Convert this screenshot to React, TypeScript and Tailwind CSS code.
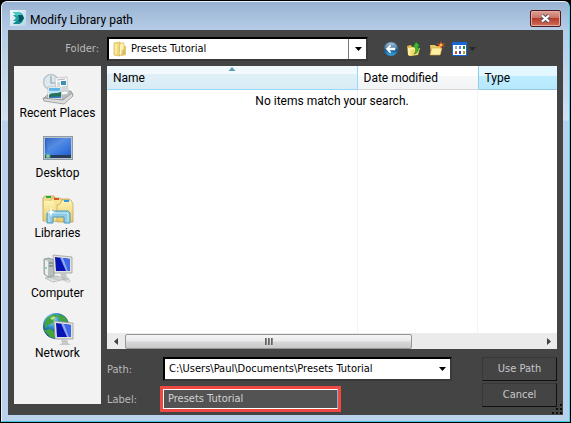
import type { ReactNode } from "react";

function AppLogo() {
	return (
		<svg width="16" height="16" viewBox="0 0 16 16" aria-hidden="true">
			<defs>
				<linearGradient id="logoBg" x2="1" y2="1">
					<stop stopColor="#f4fafc" />
					<stop offset="1" stopColor="#b5d6e4" />
				</linearGradient>
			</defs>
			<rect width="16" height="16" fill="url(#logoBg)" />
			<path d="M3 2h6q4 1 5 6-1 5-5 6H3l3-3H3l3-3-3-3h3z" fill="#1fa3a5" />
			<path d="M3 2h6l3 3-5 1z" fill="#43cbc6" />
			<path d="M8 5l4 0 2 3-3 4H8l1-4z" fill="#07565f" />
			<path d="M3 14l4-3 5 1-3 2z" fill="#128a90" />
		</svg>
	);
}

function FolderIcon() {
	return (
		<svg width="14" height="16" viewBox="0 0 14 16" aria-hidden="true">
			<path d="M1 2l6-1v14l-6-1z" fill="#f3dc80" stroke="#d9b953" strokeWidth=".7" />
			<path d="M7 2h4v12H6z" fill="#fff3b4" stroke="#d4b44e" strokeWidth=".7" />
			<path d="M11 5h2v9l-5 1V9l3-1z" fill="#e8c75f" />
			<path d="M3 3v10M8 4v9" stroke="#fff8cf" />
			<path d="M11 10v3" stroke="#8bbbd8" />
		</svg>
	);
}

function BackIcon() {
	return (
		<svg width="16" height="16" viewBox="0 0 16 16" aria-hidden="true">
			<defs>
				<linearGradient id="orb" x2="0" y2="1">
					<stop stopColor="#b4c6d1" />
					<stop offset=".45" stopColor="#4b7fa8" />
					<stop offset=".55" stopColor="#10528b" />
					<stop offset="1" stopColor="#42b4ef" />
				</linearGradient>
			</defs>
			<circle cx="8" cy="8" r="7" fill="url(#orb)" stroke="#2a5f86" strokeWidth=".6" />
			<path d="M3 8l4-4 1 1-2 2h6v2H6l2 2-1 1z" fill="#fff" stroke="#fff" strokeWidth=".5" />
		</svg>
	);
}

function UpFolderIcon() {
	return (
		<svg width="16" height="16" viewBox="0 0 16 16" aria-hidden="true">
			<path d="M1 5l4-1 1 2 4-1v8l-6 2-2-1z" fill="#e2bd4b" />
			<path d="M2 7l7-1v6l-4 3-3-1z" fill="#fff0a2" />
			<path d="M5 9l9-2-2 7-8 1z" fill="#f3d868" />
			<path d="M9 12c1-2 1-4 0-6H7l3-5 4 4h-2c1 4 0 7-4 8z" fill="#3eb735" stroke="#187d1a" strokeWidth=".6" />
		</svg>
	);
}

function NewFolderIcon() {
	return (
		<svg width="16" height="16" viewBox="0 0 16 16" aria-hidden="true">
			<path d="M1 4h5l1 1h5v8H2z" fill="#e9c862" />
			<path d="M3 7h10l-2 7H1z" fill="#fff0a4" stroke="#d7ad3f" strokeWidth=".6" />
			<path d="M12 0l1 3 3-1-2 2 2 2-3-1-1 3-1-3-3 1 2-2-2-2 3 1z" fill="#ee5d20" />
			<circle cx="12" cy="4" r="1.2" fill="#ffc343" />
		</svg>
	);
}

function ViewIcon() {
	return (
		<svg width="24" height="16" viewBox="0 0 24 16" aria-hidden="true">
			<rect y="1" width="15" height="14" rx="1" fill="#1667d5" />
			<rect x="1" y="4" width="13" height="10" fill="#fff" />
			<path d="M3 5h2v3H3z" fill="#9ba9b9" />
			<path d="M7 5h2v3H7z" fill="#6b7fe1" />
			<path d="M11 5h2v3h-2z" fill="#248d36" />
			<path d="M3 10h2v3H3z" fill="#d45132" />
			<path d="M7 10h2v3H7z" fill="#334fae" />
			<path d="M11 10h2v3h-2z" fill="#c89d22" />
			<path d="M17 6h7l-3.500 4z" fill="#292929" />
		</svg>
	);
}

function RecentIcon() {
	return (
		<svg width="32" height="32" viewBox="0 0 32 32" aria-hidden="true">
			<circle cx="9" cy="9" r="7.500" fill="#dce8ed" stroke="#bcc6cb" strokeWidth="1.500" />
			<path d="M9 3v7h6" fill="none" stroke="#8fa6b3" strokeWidth="1.200" />
			<path d="M2 25l7-7h20l2 4-8 5z" fill="#b9bcbe" stroke="#85898b" strokeWidth=".6" />
			<path d="M13 5l12-1 1 17-12 2z" fill="#fbfbfa" stroke="#b8babb" strokeWidth=".7" />
			<path d="M15 7l8-1M15 10h3M15 12h3M20 14h5M20 16h5M20 18h5" stroke="#a9b4bb" />
			<path d="M19 8h5v4h-5z" fill="#3e8fb4" />
			<path d="M6 14h13l1 12H6z" fill="#fff" stroke="#a8adb0" strokeWidth=".6" />
			<path d="M7 15h11l1 6H7z" fill="#62b3e8" />
			<path d="M7 18c4-1 7 1 12-1v4H7z" fill="#bfe4f5" />
			<path d="M7 22c3-3 6-1 12-3v6H7z" fill="#26715a" />
			<path d="M7 24l12-1v2H7z" fill="#3878bd" />
			<path d="M1 25l20 2 9-7 1 3-9 8-20-3z" fill="#dcdddd" stroke="#85898b" strokeWidth=".7" />
		</svg>
	);
}

function DesktopIcon() {
	return (
		<svg width="32" height="32" viewBox="0 0 32 32" aria-hidden="true">
			<defs>
				<linearGradient id="desk" x2="1" y2="1">
					<stop stopColor="#164fbf" />
					<stop offset=".5" stopColor="#4a87e5" />
					<stop offset="1" stopColor="#235fd0" />
				</linearGradient>
			</defs>
			<rect x="1.500" y="3.500" width="29" height="23" fill="#b9c2ca" stroke="#8b9ba7" />
			<rect x="3" y="5" width="26" height="17" fill="url(#desk)" />
			<path d="M3 5h24L6 18z" fill="#fff" opacity=".12" />
			<path d="M3 22h26v3H3z" fill="#263d57" />
			<circle cx="6" cy="23" r="2.500" fill="#34a3b1" />
			<path d="M6 21v4M4 23h4" stroke="#e9df65" strokeWidth=".7" />
		</svg>
	);
}

function LibrariesIcon() {
	return (
		<svg width="32" height="32" viewBox="0 0 32 32" aria-hidden="true">
			<defs>
				<linearGradient id="lib" x2="0" y2="1">
					<stop stopColor="#fff4b4" />
					<stop offset="1" stopColor="#e8c967" />
				</linearGradient>
			</defs>
			<path d="M1 5l2-2h9l2 3h13v22H1z" fill="#eed98c" stroke="#bb983d" strokeWidth=".7" />
			<path d="M4 3h5v2H4z" fill="#28a846" />
			<path d="M8 8l2-3h8l2 3h9v20H8z" fill="#f8e594" stroke="#c29f46" strokeWidth=".7" />
			<path d="M12 5h5v2h-5z" fill="#d6532e" />
			<path d="M15 12l3-1 2-4h9l2 4v18H15z" fill="url(#lib)" stroke="#c5a24c" strokeWidth=".7" />
			<path d="M2 8h10v20H2z" fill="url(#lib)" />
			<path d="M22 7h5v2h-5z" fill="#2f9be0" />
			<path d="M5 30V20l2-2h19l2 2v10h-6v-6H11v6z" fill="#8fcbe4" stroke="#4d9bbd" />
			<path d="M7 29v-9h19v9" fill="none" stroke="#c9ebf6" />
			<path d="M9 14l1 4 4 1-4 1-1 4-1-4-4-1 4-1z" fill="#fff" />
		</svg>
	);
}

function Monitor() {
	return (
		<>
			<path d="M11 2l19 2 0 16-18 0z" fill="#e1e2d9" stroke="#8f9692" strokeWidth=".7" />
			<path d="M13 4l15 2v12H14z" fill="#0813b4" />
			<path d="M20 5l8 1v12h-2z" fill="#3f66ea" />
			<path d="M18 4.600l3 .4 5 13h-2z" fill="#8ea6f5" />
			<path d="M18 20h6l1 4 3 2-5 2-7-2 3-2z" fill="#c4c9c8" />
		</>
	);
}

function ComputerIcon() {
	return (
		<svg width="32" height="32" viewBox="0 0 32 32" aria-hidden="true">
			<path d="M2 6l5-1 5 2v16l-6 1-4-3z" fill="#b7c0bf" stroke="#7f8988" strokeWidth=".7" />
			<path d="M3 7l3 1v15l-3-2z" fill="#edf0ef" />
			<path d="M7 10h4M7 13h4" stroke="#64716e" />
			<path d="M4 14v2" stroke="#49b95c" />
			<Monitor />
			<path d="M3 25l12-2 8 3-12 3z" fill="#eceeed" stroke="#a1a7a6" strokeWidth=".7" />
			<path d="M6 25l10-1M8 26l10-1M11 27l9-1" stroke="#a6adac" strokeWidth=".6" />
			<ellipse cx="26" cy="28" rx="2.500" ry="1.300" fill="#e3e6e5" stroke="#a6adac" strokeWidth=".4" />
		</svg>
	);
}

function NetworkIcon() {
	return (
		<svg width="32" height="32" viewBox="0 0 32 32" aria-hidden="true">
			<defs>
				<radialGradient id="globe" cx=".35" cy=".25">
					<stop stopColor="#a9e4f5" />
					<stop offset=".6" stopColor="#328fcb" />
					<stop offset="1" stopColor="#14598f" />
				</radialGradient>
			</defs>
			<circle cx="14" cy="13" r="13" fill="url(#globe)" />
			<path d="M5 5l7-4 4 2-4 3-1 4-5 2-3 4V9zM17 1l6 3 3 5-8-1-2-3zM2 17l7-1 4 4-1 5-4-1z" fill="#43a63d" />
			<path d="M8 5l4-2 2 2-4 2z" fill="#b6df88" />
			<g transform="translate(1 6)">
				<Monitor />
			</g>
		</svg>
	);
}

const places: { name: string; icon: ReactNode }[] = [
	{ name: "Recent Places", icon: <RecentIcon /> },
	{ name: "Desktop", icon: <DesktopIcon /> },
	{ name: "Libraries", icon: <LibrariesIcon /> },
	{ name: "Computer", icon: <ComputerIcon /> },
	{ name: "Network", icon: <NetworkIcon /> },
];

const tools: { name: string; icon: ReactNode }[] = [
	{ name: "Back", icon: <BackIcon /> },
	{ name: "Up one level", icon: <UpFolderIcon /> },
	{ name: "Create new folder", icon: <NewFolderIcon /> },
	{ name: "View menu", icon: <ViewIcon /> },
];

function DropArrow() {
	return (
		<svg width="7" height="4" viewBox="0 0 7 4" className="mr-1 shrink-0" aria-hidden="true">
			<path d="M0 0h7L3.500 4z" fill="#000" />
		</svg>
	);
}

function DialogButton({ children }: { children: ReactNode }) {
	return (
		<button
			type="button"
			className="h-6 w-full border border-t-[#383838] border-l-[#383838] border-r-[#101010] border-b-[#101010] bg-[#444] leading-4 text-[#c8c8c8]"
		>
			{children}
		</button>
	);
}

function App() {
	return (
		<main className="flex min-h-screen flex-col border border-black bg-black font-['DejaVu_Sans_Condensed','DejaVu_Sans',sans-serif] text-[11px] text-black">
			<div className="flex flex-1 flex-col rounded-t-md border border-t-[#eaf3fb] border-r-[#43d3ee] border-b-[#43c5de] border-l-[#e4f0fa] bg-[linear-gradient(#98b3d2_0px,#b5cce6_28px,#d3e1f1_118px,#b9d1ea_119px)] px-1.5 pb-1.5">
				<header className="flex h-7 items-start gap-1 pt-2 pr-0.5 pl-0.5">
					<AppLogo />
					<h1 className="flex-1 font-['Roboto','Noto_Sans',sans-serif] text-xs leading-5">Modify Library path</h1>
					<button
						type="button"
						aria-label="Close"
						className="flex h-[17px] w-[31px] items-center justify-center rounded-xs border border-[#4c1c22] bg-[linear-gradient(#dda196_0%,#cc7468_45%,#b53b2a_50%,#cf705c_100%)] shadow-[inset_0_0_0_1px_#e3aaa1]"
					>
						<svg width="11" height="9" viewBox="0 0 11 9" aria-hidden="true">
							<path d="M2 1.500l7 6M9 1.500l-7 6" stroke="#555a68" strokeWidth="4" />
							<path d="M2 1.500l7 6M9 1.500l-7 6" stroke="#fff" strokeWidth="2.200" />
						</svg>
					</button>
				</header>

				<div className="flex flex-1 flex-col bg-[#444] pt-[7px] pr-1.5 pl-1.5">
					<div className="flex items-center">
						<label htmlFor="folder" className="w-[93px] shrink-0 pr-2 text-right text-[#bababa]">
							Folder:
						</label>
						<div className="flex h-6 w-[261px] shrink-0 items-center border-2 border-t-black border-r-[#393939] border-b-[#393939] border-l-black bg-white">
							<div className="flex h-full flex-1 items-center gap-1 border-r border-[#777] pl-1">
								<FolderIcon />
								<select id="folder" className="min-w-0 flex-1 appearance-none bg-transparent pt-px outline-none">
									<option>Presets Tutorial</option>
								</select>
							</div>
							<span className="ml-1.5">
								<DropArrow />
							</span>
						</div>
						<div className="ml-[15px] flex items-center gap-[7px]">
							{tools.map((tool) => (
								<button key={tool.name} type="button" aria-label={tool.name}>
									{tool.icon}
								</button>
							))}
						</div>
					</div>

					<div className="mt-[5px] flex flex-1 gap-1.5">
						<nav className="mb-[11px] flex w-[87px] shrink-0 flex-col gap-3 bg-[#f2f2f2] pt-[7px]">
							{places.map((place) => (
								<a
									key={place.name}
									href="#"
									className="flex flex-col items-center font-['Roboto','Noto_Sans',sans-serif] text-xs leading-4"
								>
									{place.icon}
									{place.name}
								</a>
							))}
						</nav>

						<div className="flex min-w-0 flex-1 flex-col">
							<div className="flex flex-1 flex-col bg-white">
								<div className="flex flex-1 flex-col font-['Roboto','Noto_Sans',sans-serif] text-xs">
									<table className="w-full table-fixed text-left">
										<thead>
											<tr className="h-[23px]">
												<th
													aria-sort="ascending"
													className="relative w-[250px] border-r border-b border-[#96d9f9] bg-[linear-gradient(#f2f9fc_0_8px,#e1f0f7_8px,#d8ebf4)] px-1.5 pt-0.5 font-normal"
												>
													Name
													<svg width="7" height="4" viewBox="0 0 7 4" className="absolute top-px left-1/2 -translate-x-1/2" aria-hidden="true">
														<path d="M0 4h7L3.500 0z" fill="#5c9bb9" />
													</svg>
												</th>
												<th className="w-[121px] border-b border-[#d5d5d5] bg-[linear-gradient(#fff_0_10px,#f7f8fa_10px,#f1f2f4)] px-1.5 pt-0.5 font-normal">
													Date modified
												</th>
												<th className="border-b border-l border-[#93c9e3] bg-[linear-gradient(#e3f7ff_0_10px,#bdedff_10px,#b7e7fb)] px-1.5 pt-0.5 font-normal">
													Type
												</th>
											</tr>
										</thead>
									</table>
									<div className="grid flex-1 grid-cols-[251px_120px_1fr] grid-rows-1">
										<p className="z-10 col-span-3 col-start-1 row-start-1 pt-[3px] text-center leading-4">
											No items match your search.
										</p>
										<div className="col-start-1 row-start-1 border-r border-[#edf5fb]" />
										<div className="col-start-2 row-start-1 border-r border-[#edf5fb]" />
									</div>
								</div>

								<div className="flex h-4 items-center bg-[#ebebeb]">
									<span className="flex w-[18px] justify-center">
										<svg width="4" height="7" viewBox="0 0 4 7" aria-hidden="true">
											<path d="M4 0v7L0 3.500z" fill="#404040" />
										</svg>
									</span>
									<div className="flex h-[15px] w-[287px] items-center justify-center gap-px rounded-xs border border-[#969696] bg-[linear-gradient(#f5f5f5_0%,#e9e9eb_48%,#d7d8da_52%,#c8c9cb_100%)]">
										<span className="h-[7px] w-0.5 bg-linear-to-r from-[#505050] to-[#999]" />
										<span className="h-[7px] w-0.5 bg-linear-to-r from-[#505050] to-[#999]" />
										<span className="h-[7px] w-0.5 bg-linear-to-r from-[#505050] to-[#999]" />
									</div>
									<span className="ml-auto flex w-4 justify-center">
										<svg width="4" height="7" viewBox="0 0 4 7" aria-hidden="true">
											<path d="M0 0v7l4-3.500z" fill="#404040" />
										</svg>
									</span>
								</div>
							</div>

							<div className="flex pt-2">
								<div className="flex flex-col gap-[5px]">
									<div className="flex items-center">
										<label htmlFor="path" className="w-14 pt-0.5 text-[#bababa]">
											Path:
										</label>
										<div className="flex h-6 w-[289px] items-center border-2 border-t-black border-r-[#393939] border-b-[#393939] border-l-black bg-white">
											<select id="path" className="min-w-0 flex-1 appearance-none bg-transparent pt-px pl-1 outline-none">
												<option>C:\Users\Paul\Documents\Presets Tutorial</option>
											</select>
											<DropArrow />
										</div>
									</div>
									<div className="flex items-center">
										<label htmlFor="label" className="w-[53px] pt-0.5 text-[#bababa]">
											Label:
										</label>
										<div className="w-[181px] border-[3px] border-[#ed4842]">
											<input
												id="label"
												defaultValue="Presets Tutorial"
												autoFocus
												className="block h-5 w-full border border-white border-r-[#8fb0d0] bg-[#535353] px-1 pb-px text-[#d2d2d2] outline-none"
											/>
										</div>
									</div>
								</div>
								<div className="ml-auto flex w-[75px] flex-col gap-0.5">
									<DialogButton>Use Path</DialogButton>
									<DialogButton>Cancel</DialogButton>
								</div>
							</div>
							<svg width="11" height="11" viewBox="0 0 11 11" className="-mt-2 -mr-1.5 self-end" aria-hidden="true">
								<path d="M8 0h2v2H8zM4 4h2v2H4zM8 4h2v2H8zM0 8h2v2H0zM4 8h2v2H4zM8 8h2v2H8z" fill="#0c0c0c" />
							</svg>
						</div>
					</div>
				</div>
			</div>
		</main>
	);
}

export default App;
